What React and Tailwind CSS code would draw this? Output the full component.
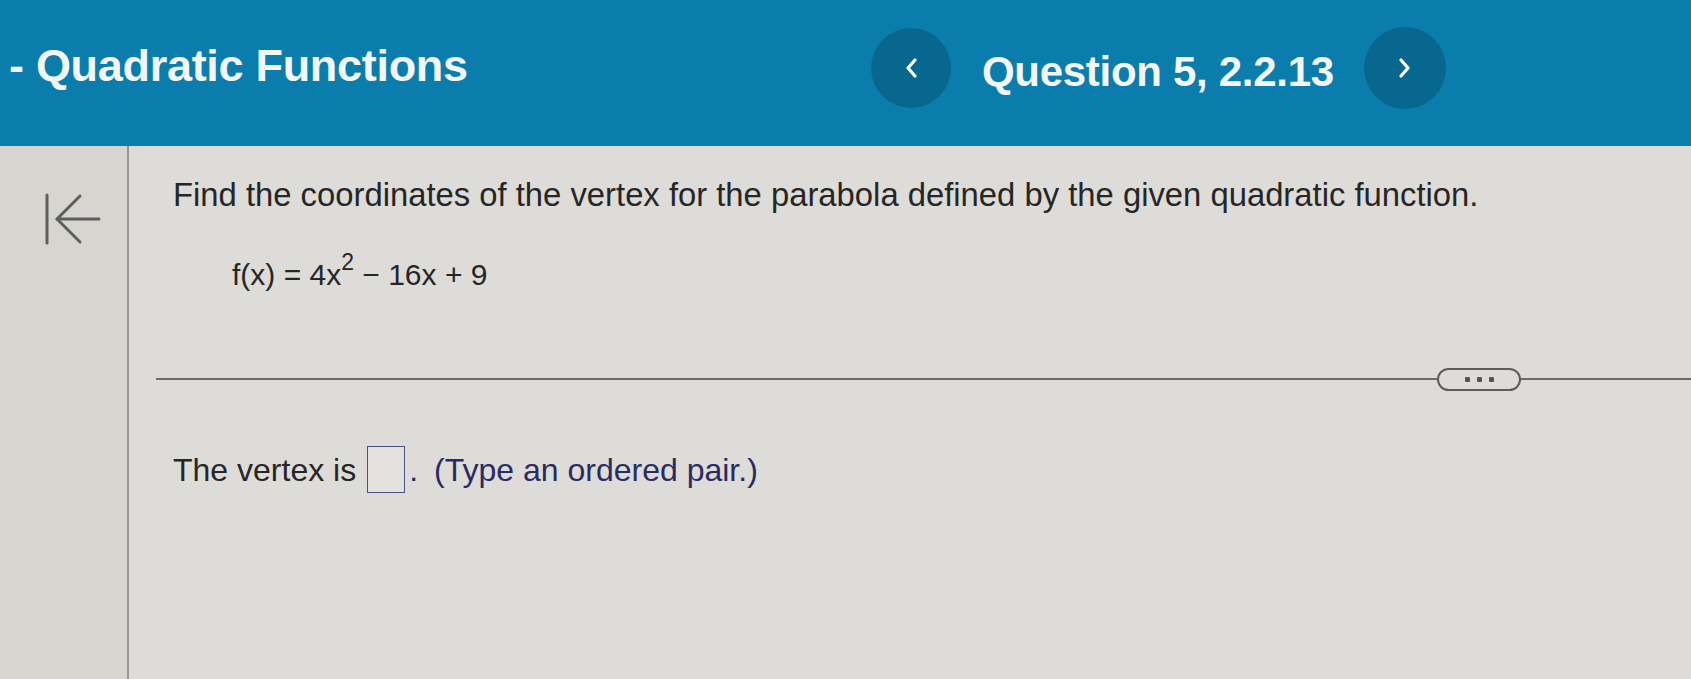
import React from 'react';

function Chevron({ dir }) {
  const points = dir === 'left' ? '10,2 3,10 10,18' : '3,2 10,10 3,18';
  return (
    <svg width="13" height="20" viewBox="0 0 13 20" fill="none">
      <polyline points={points} stroke="white" strokeWidth="3.2" strokeLinecap="round" strokeLinejoin="round" />
    </svg>
  );
}

function BackToStart() {
  return (
    <svg width="58" height="52" viewBox="0 0 58 52" fill="none" stroke="#5e5e5e" strokeWidth="3" strokeLinecap="round">
      <line x1="3" y1="2" x2="3" y2="50" />
      <line x1="13" y1="26" x2="55" y2="26" />
      <polyline points="36,3 13,26 36,49" strokeLinejoin="round" />
    </svg>
  );
}

export default function App() {
  return (
    <div className="w-[1691px] h-[679px] overflow-hidden flex flex-col font-['Liberation_Sans',Arial,sans-serif]">
      {/* Header */}
      <header className="h-[146px] shrink-0 bg-[#0b7dad] flex items-center pb-[10px]">
        <h1 className="w-[871px] shrink-0 pl-[9px] text-[45px] font-bold text-[#f4f6f6] tracking-[-0.3px] -mt-[5px]">
          - Quadratic Functions
        </h1>
        <button className="w-[80px] h-[80px] rounded-full bg-[#08678f] flex items-center justify-center">
          <Chevron dir="left" />
        </button>
        <span className="ml-[31px] mt-[6px] text-[42px] font-bold text-[#f4f6f6] tracking-[-0.3px]">Question 5, 2.2.13</span>
        <button className="ml-[30px] w-[82px] h-[82px] rounded-full bg-[#08678f] flex items-center justify-center">
          <Chevron dir="right" />
        </button>
      </header>

      <main className="flex flex-1">
        {/* Sidebar */}
        <aside className="w-[129px] shrink-0 bg-[#d7d5d0] border-r-2 border-[#9a9895] pt-[47px] pl-[44px]">
          <BackToStart />
        </aside>

        {/* Question content */}
        <section className="flex-1 bg-[#dedcd8] pt-[29px]">
          <p className="pl-[44px] text-[32.8px] leading-[40px] text-[#262626]">
            Find the coordinates of the vertex for the parabola defined by the given quadratic function.
          </p>
          <p className="mt-[40px] pl-[103px] text-[30px] leading-[40px] text-[#262626]">
            f(x) = 4x<span className="relative -top-[15px] text-[23px]">2</span> − 16x + 9
          </p>

          <div className="mt-[70px] ml-[27px] flex items-center h-[24px]">
            <div className="flex-1 h-[2px] bg-[#6b6b6b]" />
            <div className="w-[84px] h-[23px] rounded-full border-2 border-[#5c5c5c] flex items-center justify-center gap-[7px]">
              <span className="w-[5px] h-[5px] rounded-[1px] bg-[#555]" />
              <span className="w-[5px] h-[5px] rounded-[1px] bg-[#555]" />
              <span className="w-[5px] h-[5px] rounded-[1px] bg-[#555]" />
            </div>
            <div className="w-[170px] h-[2px] bg-[#6b6b6b]" />
          </div>

          <div className="mt-[55px] pl-[44px] flex items-center text-[32px] leading-[40px]">
            <span className="text-[#262626]">The vertex is</span>
            <span className="ml-[11px] w-[38px] h-[47px] border-[1.5px] border-[#44528c] bg-[#e3e1dd]" />
            <span className="ml-[4px] text-[#2b2a63]">.</span>
            <span className="ml-[16px] text-[#2b2a63]">(Type an ordered pair.)</span>
          </div>
        </section>
      </main>
    </div>
  );
}
